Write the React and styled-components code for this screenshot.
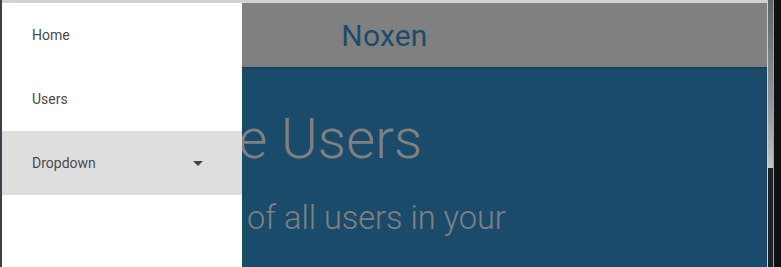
import React from 'react';
import styled, { createGlobalStyle } from 'styled-components';

const GlobalStyle = createGlobalStyle`
  html, body {
    margin: 0;
    padding: 0;
    background: #0e1012;
    font-family: Roboto, "Noto Sans", "Liberation Sans", sans-serif;
  }
`;

const Window = styled.div`
  display: flex;
  width: 781px;
  height: 267px;
  overflow: hidden;
  background: #0e1012;
`;

const LeftEdge = styled.div`
  width: 2px;
  background: #3c4146;
`;

const Viewport = styled.div`
  position: relative;
  width: 766px;
  border-top: 3px solid #d2d2d2;
  background: #1b4b6b;
  overflow: hidden;
`;

const AppBar = styled.header`
  display: flex;
  align-items: center;
  justify-content: center;
  height: 64px;
  background: #808080;
  box-shadow: 0 1px 2px rgba(0, 0, 0, 0.25);
`;

const Brand = styled.h1`
  margin: 0;
  font-size: 30px;
  font-weight: 400;
  color: #1c4c6d;
  letter-spacing: 0.2px;
`;

const Hero = styled.section`
  padding: 40px 0 0 66px;
  color: #808080;
`;

const HeroTitle = styled.h2`
  margin: 0;
  font-size: 56px;
  font-weight: 300;
  line-height: 64px;
`;

const HeroText = styled.p`
  margin: 15px 0 0;
  font-size: 32.5px;
  font-weight: 300;
  line-height: 64px;
  max-width: 460px;
`;

const Drawer = styled.nav`
  position: absolute;
  top: 0;
  left: 0;
  bottom: 0;
  width: 240px;
  background: #ffffff;
  display: flex;
  flex-direction: column;
`;

const NavItem = styled.div`
  display: flex;
  align-items: center;
  justify-content: space-between;
  height: 64px;
  padding: 0 32px 0 30px;
  font-size: 14px;
  color: #4a4a4a;
  background: ${p => (p.$active ? '#dedede' : 'transparent')};
`;

const Caret = styled.svg`
  width: 24px;
  height: 24px;
  fill: #444;
`;

const Scrollbar = styled.div`
  display: flex;
  width: 13px;
  border-left: 1px solid #cfcfcf;
`;

const Track = styled.div`
  display: flex;
  flex-direction: column;
  width: 5px;
  background: #1d2327;
`;

const Thumb = styled.div`
  height: 168px;
  background: linear-gradient(#5f6469, #9a9c9e 70%, #c4c4c4);
`;

const FrameLine = styled.div`
  width: 1px;
  background: #9ea2a5;
`;

export default function App() {
  return (
    <>
      <GlobalStyle />
      <Window>
        <LeftEdge />
        <Viewport>
          <AppBar>
            <Brand>Noxen</Brand>
          </AppBar>
          <Hero>
            <HeroTitle>Manage Users</HeroTitle>
            <HeroText>View the list of all users in your organization</HeroText>
          </Hero>
          <Drawer>
            <NavItem>Home</NavItem>
            <NavItem>Users</NavItem>
            <NavItem $active>
              Dropdown
              <Caret viewBox="0 0 24 24">
                <path d="M7 10l5 5 5-5z" />
              </Caret>
            </NavItem>
          </Drawer>
        </Viewport>
        <Scrollbar>
          <Track>
            <Thumb />
          </Track>
          <FrameLine />
        </Scrollbar>
      </Window>
    </>
  );
}
